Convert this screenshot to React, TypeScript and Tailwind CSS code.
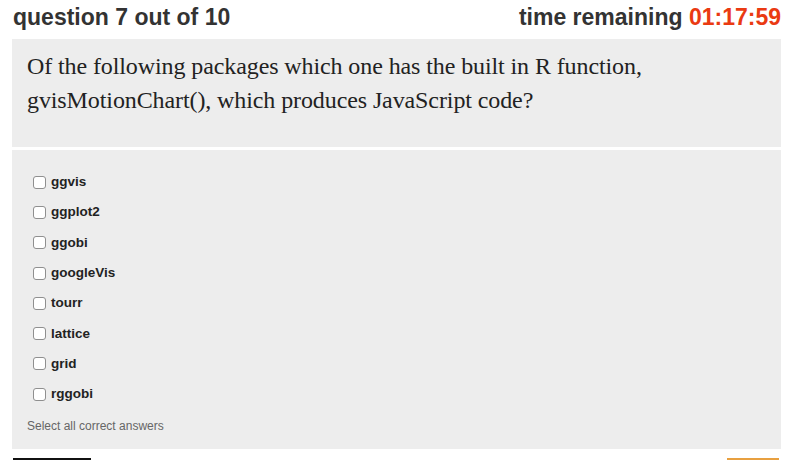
import React from "react";

const options = ["ggvis", "ggplot2", "ggobi", "googleVis", "tourr", "lattice", "grid", "rggobi"];

export default function App() {
  return (
    <div className="w-[793px] h-[460px] overflow-hidden bg-white" style={{ fontFamily: '"Liberation Sans", Arial, sans-serif' }}>
      {/* header */}
      <div className="flex items-end justify-between pl-[13px] pr-[12px] h-[33px] text-[23px] font-bold text-[#333] leading-none">
        <span className="pb-[4px]">question 7 out of 10</span>
        <span className="pb-[4px]">
          time remaining <span className="text-[#ea3a12]">01:17:59</span>
        </span>
      </div>

      <div className="mx-[12px] mt-[6px]">
        <div
          className="bg-[#ededed] h-[108px] pl-[15px] pt-[10px] text-[24px] tracking-[-0.1px] leading-[34px] text-[#222]"
          style={{ fontFamily: '"Liberation Serif", "Times New Roman", serif' }}
        >
          Of the following packages which one has the built in R function,
          <br />
          gvisMotionChart(), which produces JavaScript code?
        </div>

        <div className="bg-[#ededed] mt-[3px] h-[299px] pt-[17px] pl-[21px]">
          <div className="flex flex-col">
            {options.map((o) => (
              <label key={o} className="flex items-center h-[30.3px] gap-[5px] text-[13.5px] font-bold text-[#222]">
                <span className="w-[13px] h-[13px] rounded-[3px] border border-[#8f8f8f] bg-white shrink-0" />
                {o}
              </label>
            ))}
          </div>
          <div className="mt-[8px] -ml-[6px] text-[12px] text-[#666]">Select all correct answers</div>
        </div>

        <div className="flex justify-between mt-[9px]">
          <div className="ml-[1px] w-[78px] h-[30px] border-t-[2px] border-[#111]" />
          <div className="mr-[2px] w-[52px] h-[30px] border-t-[2px] border-[#e8a040]" />
        </div>
      </div>
    </div>
  );
}
